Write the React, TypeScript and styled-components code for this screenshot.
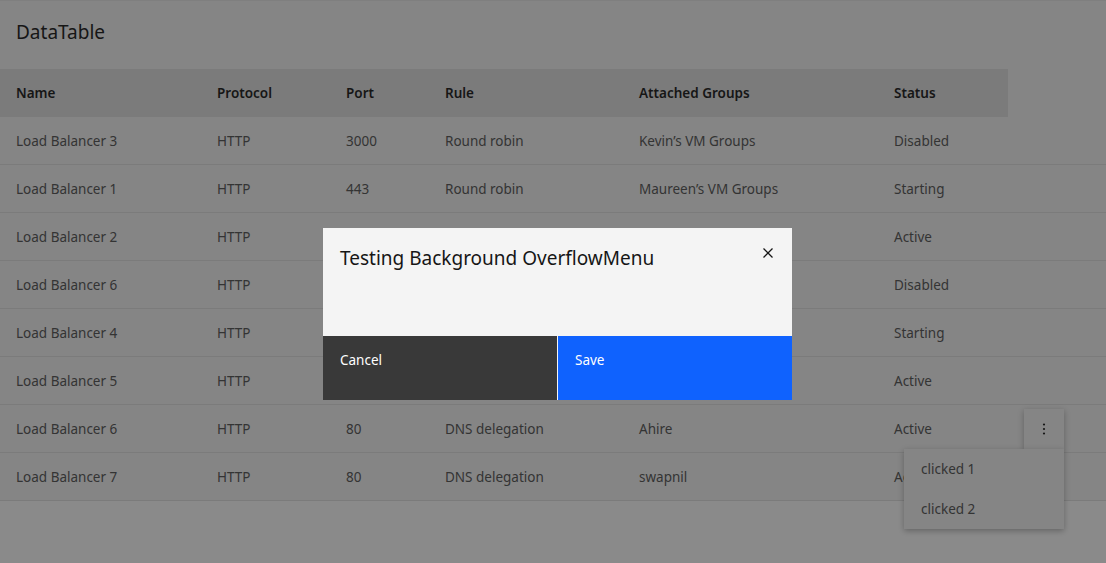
import React from 'react';
import styled, { createGlobalStyle } from 'styled-components';

const GlobalStyle = createGlobalStyle`
  html, body {
    margin: 0;
    padding: 0;
    background: #ffffff;
    font-family: 'Noto Sans', 'Open Sans', sans-serif;
  }
  * { box-sizing: border-box; }
`;

const Page = styled.div`
  position: relative;
  width: 1106px;
  height: 563px;
  overflow: hidden;
  background: #ffffff;
`;

const TableContainer = styled.div`
  background: #f4f4f4;
  border-top: 1px solid #e8e8e8;
`;

const TitleBar = styled.div`
  padding: 17px 16px 23px;
`;

const Title = styled.h4`
  margin: 0;
  font-size: 19px;
  font-weight: 400;
  line-height: 28px;
  color: #161616;
`;

const Table = styled.div`
  display: flex;
  flex-direction: column;
`;

const Cols = `201px 129px 99px 194px 255px 130px 1fr`;

const HeadRow = styled.div`
  display: grid;
  grid-template-columns: ${Cols};
  height: 48px;
  align-items: center;
  background: #ffffff;
`;

const HeadCell = styled.div<{ $empty?: boolean }>`
  height: 100%;
  display: flex;
  align-items: center;
  padding-left: 16px;
  font-size: 13.5px;
  font-weight: 600;
  color: #161616;
  background: ${(p) => (p.$empty ? '#f4f4f4' : '#e0e0e0')};
`;

const Row = styled.div`
  display: grid;
  grid-template-columns: ${Cols};
  height: 48px;
  align-items: center;
  border-bottom: 1px solid #e0e0e0;
  background: #f4f4f4;
`;

const Cell = styled.div`
  padding-left: 16px;
  font-size: 13.5px;
  color: #525252;
  white-space: nowrap;
`;

const MenuCell = styled.div`
  position: relative;
  height: 100%;
  display: flex;
  justify-content: flex-end;
  align-items: center;
  padding-right: 42px;
`;

const MenuTrigger = styled.button`
  width: 40px;
  height: 40px;
  border: none;
  padding: 0;
  display: flex;
  align-items: center;
  justify-content: center;
  background: #f4f4f4;
  box-shadow: 0 2px 6px rgba(0, 0, 0, 0.3);
`;

const Menu = styled.ul`
  position: absolute;
  top: 44px;
  right: 42px;
  width: 160px;
  margin: 0;
  padding: 0;
  list-style: none;
  background: #f4f4f4;
  box-shadow: 0 2px 6px rgba(0, 0, 0, 0.3);
  z-index: 2;
`;

const MenuItem = styled.li`
  height: 40px;
  display: flex;
  align-items: center;
  padding-left: 17px;
  font-size: 13.5px;
  color: #525252;
`;

const Overlay = styled.div`
  position: absolute;
  inset: 0;
  background: rgba(22, 22, 22, 0.5);
  z-index: 5;
`;

const Modal = styled.div`
  position: absolute;
  left: 323px;
  top: 228px;
  width: 469px;
  height: 172px;
  background: #f4f4f4;
  z-index: 6;
  display: flex;
  flex-direction: column;
`;

const ModalHeader = styled.div`
  flex: 1;
  padding: 17px 16px 0 17px;
  display: flex;
  justify-content: space-between;
  align-items: flex-start;
`;

const ModalTitle = styled.h3`
  margin: 0;
  font-size: 19px;
  font-weight: 400;
  line-height: 26px;
  color: #161616;
`;

const CloseButton = styled.button`
  border: none;
  background: transparent;
  padding: 0;
  width: 16px;
  height: 16px;
  display: flex;
`;

const Footer = styled.div`
  display: grid;
  grid-template-columns: 1fr 1fr;
  gap: 1px;
  height: 64px;
`;

const FooterButton = styled.button<{ $primary?: boolean }>`
  border: none;
  text-align: left;
  padding: 0 16px 16px 17px;
  font-family: inherit;
  font-size: 13.5px;
  color: #ffffff;
  background: ${(p) => (p.$primary ? '#0f62fe' : '#393939')};
`;

const rows = [
  ['Load Balancer 3', 'HTTP', '3000', 'Round robin', "Kevin\u2019s VM Groups", 'Disabled'],
  ['Load Balancer 1', 'HTTP', '443', 'Round robin', "Maureen\u2019s VM Groups", 'Starting'],
  ['Load Balancer 2', 'HTTP', '80', 'DNS delegation', "Andrew\u2019s VM Groups", 'Active'],
  ['Load Balancer 6', 'HTTP', '3000', 'Round robin', "Marc\u2019s VM Groups", 'Disabled'],
  ['Load Balancer 4', 'HTTP', '443', 'Round robin', "Mel\u2019s VM Groups", 'Starting'],
  ['Load Balancer 5', 'HTTP', '80', 'DNS delegation', "Ronja\u2019s VM Groups", 'Active'],
  ['Load Balancer 6', 'HTTP', '80', 'DNS delegation', 'Ahire', 'Active'],
  ['Load Balancer 7', 'HTTP', '80', 'DNS delegation', 'swapnil', 'Active'],
];

const headers = ['Name', 'Protocol', 'Port', 'Rule', 'Attached Groups', 'Status'];

function Dots() {
  return (
    <svg width="16" height="16" viewBox="0 0 16 16" fill="#161616">
      <circle cx="8" cy="3.5" r="1.1" />
      <circle cx="8" cy="8" r="1.1" />
      <circle cx="8" cy="12.5" r="1.1" />
    </svg>
  );
}

function CloseIcon() {
  return (
    <svg width="16" height="16" viewBox="0 0 16 16" stroke="#161616" strokeWidth="1.3">
      <line x1="3.5" y1="3.5" x2="12.5" y2="12.5" />
      <line x1="12.5" y1="3.5" x2="3.5" y2="12.5" />
    </svg>
  );
}

export default function App() {
  return (
    <Page>
      <GlobalStyle />
      <TableContainer>
        <TitleBar>
          <Title>DataTable</Title>
        </TitleBar>
        <Table>
          <HeadRow>
            {headers.map((h) => (
              <HeadCell key={h}>{h}</HeadCell>
            ))}
            <HeadCell $empty />
          </HeadRow>
          {rows.map((r, i) => (
            <Row key={i}>
              {r.map((c, j) => (
                <Cell key={j}>{c}</Cell>
              ))}
              <MenuCell>
                {i === 6 && (
                  <>
                    <MenuTrigger>
                      <Dots />
                    </MenuTrigger>
                    <Menu>
                      <MenuItem>clicked 1</MenuItem>
                      <MenuItem>clicked 2</MenuItem>
                    </Menu>
                  </>
                )}
              </MenuCell>
            </Row>
          ))}
        </Table>
      </TableContainer>
      <Overlay />
      <Modal>
        <ModalHeader>
          <ModalTitle>Testing Background OverflowMenu</ModalTitle>
          <CloseButton>
            <CloseIcon />
          </CloseButton>
        </ModalHeader>
        <Footer>
          <FooterButton>Cancel</FooterButton>
          <FooterButton $primary>Save</FooterButton>
        </Footer>
      </Modal>
    </Page>
  );
}
